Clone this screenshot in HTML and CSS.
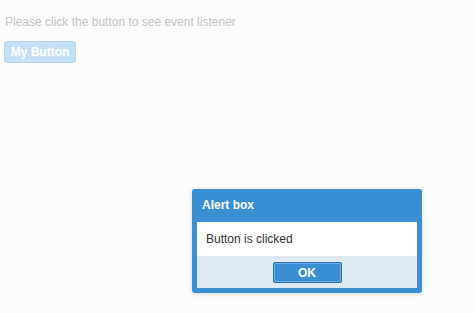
FILE: index.html
```html
<!DOCTYPE html>
<html>
<head>
<meta charset="utf-8">
<link rel="stylesheet" href="styles.css">
</head>
<body>
<div class="page">
  <p class="hint">Please click the button to see event listener</p>
  <button class="my-btn">My Button</button>
</div>
<div class="dialog">
  <div class="dialog-title">Alert box</div>
  <div class="dialog-body">Button is clicked</div>
  <div class="dialog-footer"><button class="ok-btn">OK</button></div>
</div>
</body>
</html>
```

FILE: styles.css
```css
html, body {
  margin: 0;
  padding: 0;
  background: #fcfcfc;
  font-family: "Liberation Sans", Arial, sans-serif;
  font-size: 12px;
}
.page {
  padding: 15px 5px 0 5px;
}
.hint {
  margin: 0;
  color: #c2c2c2;
  line-height: 14px;
}
.my-btn {
  margin-top: 12px;
  margin-left: -1px;
  width: 72px;
  height: 22px;
  background: #c5e0f6;
  border: 1px solid #b6d5ef;
  border-radius: 3px;
  color: #fff;
  font-family: "Liberation Sans", Arial, sans-serif;
  font-weight: bold;
  font-size: 12px;
  padding: 0;
}
.dialog {
  position: absolute;
  left: 192px;
  top: 189px;
  width: 220px;
  border: 5px solid #3a8fd3;
  border-top-width: 1px;
  border-radius: 3px;
  background: #3a8fd3;
  box-shadow: 0 1px 4px rgba(0,0,0,0.15);
}
.dialog-title {
  height: 32px;
  line-height: 30px;
  padding-left: 5px;
  color: #fff;
  font-weight: bold;
  font-size: 12px;
}
.dialog-body {
  background: #fff;
  height: 34px;
  line-height: 34px;
  padding-left: 9px;
  color: #333;
}
.dialog-footer {
  background: #dfe9f2;
  height: 32px;
  display: flex;
  justify-content: center;
  align-items: flex-start;
  padding-top: 6px;
  box-sizing: border-box;
}
.ok-btn {
  width: 69px;
  height: 21px;
  background: #3a8fd3;
  border: 1px solid #2b6fae;
  box-shadow: inset 0 0 0 1px #6aaee3;
  border-radius: 2px;
  color: #fff;
  font-family: "Liberation Sans", Arial, sans-serif;
  font-weight: bold;
  font-size: 12px;
  padding: 0;
}
```
